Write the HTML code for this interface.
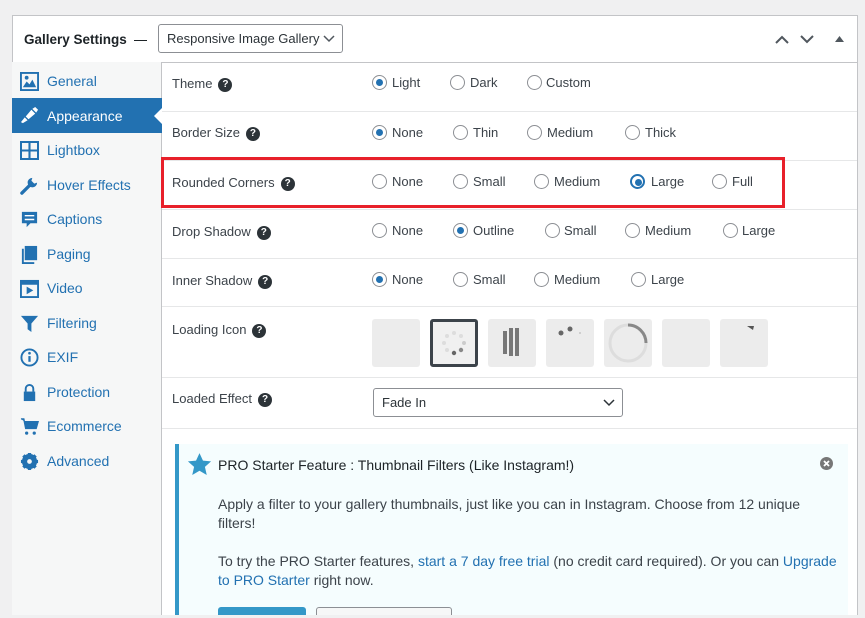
<!DOCTYPE html>
<html><head><meta charset="utf-8"><style>
*{box-sizing:border-box;margin:0;padding:0}
html,body{width:865px;height:618px;overflow:hidden}
body{background:#f0f0f1;font-family:"Liberation Sans",sans-serif;font-size:13px;color:#3c434a;position:relative}
.a{position:absolute;white-space:nowrap}
.panel{position:absolute;left:12px;top:15px;width:846px;height:603px;background:#fff;border:1px solid #c3c4c7;border-bottom:none}
.side{position:absolute;left:12px;top:62px;width:150px;height:556px;background:#f6f7f7;border-right:1px solid #c3c4c7}
.hl{position:absolute;left:162px;width:695px;height:1px;background:#e6e7e8}
.r{position:absolute;width:15px;height:15px;border:1px solid #8c8f94;border-radius:50%;background:#fff}
.r.on::after{content:"";position:absolute;left:3px;top:3px;width:7px;height:7px;border-radius:50%;background:#2271b1}
.q{display:inline-block;width:14px;height:14px;border-radius:50%;background:#2c3338;color:#fff;font-size:10px;font-weight:bold;text-align:center;line-height:14px;margin-left:6px;vertical-align:1px}
.nav{position:absolute;left:47px;color:#2271b1;font-size:14px}
.ic{position:absolute;left:20px;width:19px;height:19px}
.box{position:absolute;top:319px;width:48px;height:48px;background:#ececec;border-radius:3px}
a{color:#2271b1}
</style></head><body>
<div class="panel"></div>
<div class="a" style="left:12px;top:62px;width:846px;height:1px;background:#c3c4c7"></div>
<div class="a" style="left:24px;top:32px;font-size:13.5px;font-weight:bold;color:#1d2327">Gallery Settings</div>
<div class="a" style="left:134px;top:40px;width:13px;height:1px;background:#1d2327"></div>
<div class="a" style="left:158px;top:24px;width:185px;height:29px;border:1px solid #8c8f94;border-radius:3px;padding:6px 8px;color:#2c3338;font-size:13px">Responsive Image Gallery</div>
<svg class="a" style="left:323px;top:35px" width="12" height="8"><path d="M1 1l5 5 5-5" fill="none" stroke="#50575e" stroke-width="1.5"/></svg>
<svg class="a" style="left:775px;top:35px" width="14" height="9"><path d="M1 8l6-6 6 6" fill="none" stroke="#50575e" stroke-width="2"/></svg>
<svg class="a" style="left:800px;top:35px" width="14" height="9"><path d="M1 1l6 6 6-6" fill="none" stroke="#50575e" stroke-width="2"/></svg>
<svg class="a" style="left:835px;top:36px" width="9" height="6"><path d="M0 6L4.5 0 9 6z" fill="#50575e"/></svg>

<div class="side"></div>
<div class="a" style="left:12px;top:98px;width:150px;height:35px;background:#2271b1"></div>
<svg class="a" style="left:154px;top:108px" width="8" height="16"><path d="M8 0L0 8 8 16z" fill="#fff"/></svg>

<svg class="ic" style="top:72px" viewBox="0 0 20 20"><rect x="1" y="1" width="18" height="18" fill="none" stroke="#2271b1" stroke-width="2"/><path d="M3 16l4-6 3 3 3-5 4 8z" fill="#2271b1"/><circle cx="7" cy="6" r="2" fill="#2271b1"/></svg>
<div class="nav" style="top:73px">General</div>
<svg class="ic" style="top:106px" viewBox="0 0 20 20"><path d="M1 17l4-5 3 3-5 3z M6 11l6-7 4 4-7 6z M13 3l3-2 3 3-2 3z" fill="#fff"/></svg>
<div class="nav" style="top:108px;color:#fff">Appearance</div>
<svg class="ic" style="top:141px" viewBox="0 0 20 20"><path d="M1 1h18v18H1z M10 1v18 M1 10h18" fill="none" stroke="#2271b1" stroke-width="2.2"/></svg>
<div class="nav" style="top:142px">Lightbox</div>
<svg class="ic" style="top:176px" viewBox="0 0 20 20"><path d="M2 18l8-8" stroke="#2271b1" stroke-width="3.5" stroke-linecap="round"/><path d="M13 2a5 5 0 1 0 5 5l-3 1-3-3z" fill="#2271b1"/></svg>
<div class="nav" style="top:177px">Hover Effects</div>
<svg class="ic" style="top:210px" viewBox="0 0 20 20"><path d="M2 2h16v12H11l-4 4v-4H2z" fill="#2271b1"/><path d="M5 6h10M5 10h10" stroke="#fff" stroke-width="1.5"/></svg>
<div class="nav" style="top:211px">Captions</div>
<svg class="ic" style="top:245px" viewBox="0 0 20 20"><path d="M5 1h13v15H5z" fill="#2271b1"/><path d="M3 4v15h12" fill="none" stroke="#2271b1" stroke-width="2"/></svg>
<div class="nav" style="top:246px">Paging</div>
<svg class="ic" style="top:279px" viewBox="0 0 20 20"><rect x="1" y="2" width="18" height="17" fill="none" stroke="#2271b1" stroke-width="2"/><path d="M1 2h18v4H1z" fill="#2271b1"/><path d="M7 8v8l7-4z" fill="#2271b1"/></svg>
<div class="nav" style="top:280px">Video</div>
<svg class="ic" style="top:314px" viewBox="0 0 20 20"><path d="M1 2h18l-7 8v9l-4-3v-6z" fill="#2271b1"/></svg>
<div class="nav" style="top:315px">Filtering</div>
<svg class="ic" style="top:348px" viewBox="0 0 20 20"><circle cx="10" cy="10" r="8.5" fill="none" stroke="#2271b1" stroke-width="2"/><path d="M10 8.5v6" stroke="#2271b1" stroke-width="2.4"/><circle cx="10" cy="5.5" r="1.4" fill="#2271b1"/></svg>
<div class="nav" style="top:349px">EXIF</div>
<svg class="ic" style="top:383px" viewBox="0 0 20 20"><path d="M6 9V6a4 4 0 0 1 8 0v3" fill="none" stroke="#2271b1" stroke-width="2"/><rect x="4" y="9" width="12" height="10" fill="#2271b1"/></svg>
<div class="nav" style="top:384px">Protection</div>
<svg class="ic" style="top:417px" viewBox="0 0 20 20"><path d="M1 2h3l2 10h11l2-7H5" fill="#2271b1" stroke="#2271b1" stroke-width="1.5"/><circle cx="7" cy="17" r="1.7" fill="#2271b1"/><circle cx="15" cy="17" r="1.7" fill="#2271b1"/></svg>
<div class="nav" style="top:418px">Ecommerce</div>
<svg class="ic" style="top:452px" viewBox="0 0 20 20"><circle cx="10" cy="10" r="6" fill="none" stroke="#2271b1" stroke-width="4"/><path d="M10 1v18M1 10h18M3.6 3.6l12.8 12.8M16.4 3.6L3.6 16.4" stroke="#2271b1" stroke-width="3.5"/><circle cx="10" cy="10" r="2.5" fill="#f6f7f7"/></svg>
<div class="nav" style="top:453px">Advanced</div>

<div class="hl" style="top:111px"></div><div class="hl" style="top:160px"></div><div class="hl" style="top:209px"></div><div class="hl" style="top:258px"></div><div class="hl" style="top:306px"></div><div class="hl" style="top:377px"></div><div class="hl" style="top:428px"></div>
<div class="a" style="left:161px;top:157px;width:624px;height:51px;border:3px solid #e8202a"></div>

<div class="a" style="left:172px;top:76px">Theme<span class="q">?</span></div>
<div class="a" style="left:172px;top:125px">Border Size<span class="q">?</span></div>
<div class="a" style="left:172px;top:175px">Rounded Corners<span class="q">?</span></div>
<div class="a" style="left:172px;top:224px">Drop Shadow<span class="q">?</span></div>
<div class="a" style="left:172px;top:273px">Inner Shadow<span class="q">?</span></div>
<div class="a" style="left:172px;top:322px">Loading Icon<span class="q">?</span></div>
<div class="a" style="left:172px;top:391px">Loaded Effect<span class="q">?</span></div>

<div class="r on" style="left:372px;top:75px"></div><div class="a" style="left:392px;top:75px">Light</div>
<div class="r" style="left:450px;top:75px"></div><div class="a" style="left:470px;top:75px">Dark</div>
<div class="r" style="left:527px;top:75px"></div><div class="a" style="left:546px;top:75px">Custom</div>

<div class="r on" style="left:372px;top:125px"></div><div class="a" style="left:392px;top:125px">None</div>
<div class="r" style="left:453px;top:125px"></div><div class="a" style="left:473px;top:125px">Thin</div>
<div class="r" style="left:527px;top:125px"></div><div class="a" style="left:547px;top:125px">Medium</div>
<div class="r" style="left:625px;top:125px"></div><div class="a" style="left:645px;top:125px">Thick</div>

<div class="r" style="left:372px;top:174px"></div><div class="a" style="left:392px;top:174px">None</div>
<div class="r" style="left:453px;top:174px"></div><div class="a" style="left:473px;top:174px">Small</div>
<div class="r" style="left:534px;top:174px"></div><div class="a" style="left:554px;top:174px">Medium</div>
<div class="r on" style="left:630px;top:174px;border:2px solid #2271b1"></div><div class="a" style="left:651px;top:174px">Large</div>
<div class="r" style="left:712px;top:174px"></div><div class="a" style="left:732px;top:174px">Full</div>

<div class="r" style="left:372px;top:223px"></div><div class="a" style="left:392px;top:223px">None</div>
<div class="r on" style="left:453px;top:223px"></div><div class="a" style="left:473px;top:223px">Outline</div>
<div class="r" style="left:545px;top:223px"></div><div class="a" style="left:564px;top:223px">Small</div>
<div class="r" style="left:625px;top:223px"></div><div class="a" style="left:645px;top:223px">Medium</div>
<div class="r" style="left:723px;top:223px"></div><div class="a" style="left:742px;top:223px">Large</div>

<div class="r on" style="left:372px;top:272px"></div><div class="a" style="left:392px;top:272px">None</div>
<div class="r" style="left:453px;top:272px"></div><div class="a" style="left:473px;top:272px">Small</div>
<div class="r" style="left:534px;top:272px"></div><div class="a" style="left:554px;top:272px">Medium</div>
<div class="r" style="left:631px;top:272px"></div><div class="a" style="left:651px;top:272px">Large</div>

<div class="box" style="left:372px"></div>
<div class="box" style="left:430px;background:#f0f0f0;border:3px solid #3c434a"></div>
<svg class="a" style="left:440px;top:329px" width="28" height="28"><circle cx="14" cy="4" r="2" fill="#ddd"/><circle cx="21" cy="7" r="2" fill="#ddd"/><circle cx="24" cy="14" r="2" fill="#ccc"/><circle cx="21" cy="21" r="2.2" fill="#888"/><circle cx="14" cy="24" r="2.2" fill="#666"/><circle cx="7" cy="21" r="2" fill="#ddd"/><circle cx="4" cy="14" r="2" fill="#ddd"/><circle cx="7" cy="7" r="2" fill="#ddd"/></svg>
<div class="box" style="left:488px"></div>
<svg class="a" style="left:503px;top:328px" width="18" height="28"><rect x="0" y="3" width="4" height="23" fill="#777"/><rect x="6" y="0" width="4" height="28" fill="#777"/><rect x="12" y="0" width="4" height="28" fill="#777"/></svg>
<div class="box" style="left:546px"></div>
<svg class="a" style="left:556px;top:325px" width="30" height="16"><circle cx="5" cy="8" r="2.5" fill="#666"/><circle cx="14" cy="4" r="2.5" fill="#666"/><circle cx="24" cy="8" r="0.6" fill="#888"/></svg>
<div class="box" style="left:604px"></div>
<svg class="a" style="left:607px;top:322px" width="42" height="42"><circle cx="21" cy="21" r="18" fill="none" stroke="#ddd" stroke-width="3"/><path d="M21 3a18 18 0 0 1 18 18" fill="none" stroke="#888" stroke-width="3"/></svg>
<div class="box" style="left:662px"></div>
<div class="box" style="left:720px"></div>
<svg class="a" style="left:747px;top:325px" width="8" height="6"><path d="M0 1l7 0-1 4z" fill="#555"/></svg>

<div class="a" style="left:373px;top:388px;width:250px;height:29px;border:1px solid #8c8f94;border-radius:3px;padding:6px 8px;color:#2c3338">Fade In</div>
<svg class="a" style="left:603px;top:399px" width="12" height="8"><path d="M1 1l5 5 5-5" fill="none" stroke="#2c3338" stroke-width="1.5"/></svg>

<div class="a" style="left:175px;top:444px;width:673px;height:174px;background:#f5fdfe;border-left:4px solid #3498c8"></div>
<svg class="a" style="left:186px;top:452px" width="27" height="26" viewBox="0 0 24 24"><path d="M12 1l3.2 7 7.5.7-5.7 5 1.7 7.5L12 17.3 5.3 21.2 7 13.7 1.3 8.7l7.5-.7z" fill="#3498c8"/></svg>
<div class="a" style="left:218px;top:457px;font-size:14px;color:#1d2327">PRO Starter Feature : Thumbnail Filters (Like Instagram!)</div>
<svg class="a" style="left:820px;top:457px" width="13" height="13"><circle cx="6.5" cy="6.5" r="6.5" fill="#777"/><path d="M4 4l5 5M9 4l-5 5" stroke="#fff" stroke-width="1.8"/></svg>
<div class="a" style="left:218px;top:495px;font-size:14px;line-height:19px;white-space:normal;width:620px">Apply a filter to your gallery thumbnails, just like you can in Instagram. Choose from 12 unique filters!</div>
<div class="a" style="left:218px;top:552px;font-size:14px;line-height:19px;white-space:normal;width:620px">To try the PRO Starter features, <a>start a 7 day free trial</a> (no credit card required). Or you can <a>Upgrade to PRO Starter</a> right now.</div>
<div class="a" style="left:218px;top:607px;width:88px;height:20px;background:#3498c8;border-radius:3px"></div>
<div class="a" style="left:316px;top:607px;width:136px;height:20px;background:#f6f7f7;border:1px solid #8c8f94;border-radius:3px"></div>
<div class="a" style="left:0;top:615px;width:865px;height:3px;background:#f0f0f1"></div>
</body></html>
